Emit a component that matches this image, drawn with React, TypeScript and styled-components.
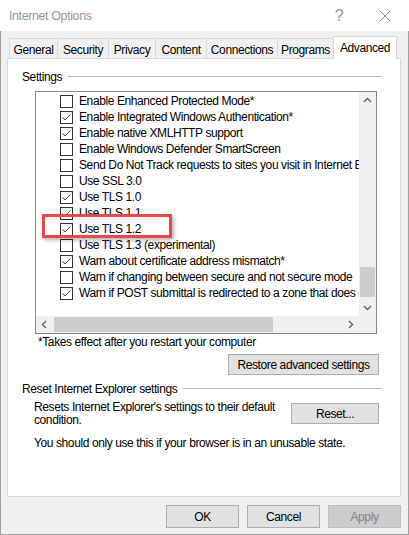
import React from 'react';
import styled, { createGlobalStyle } from 'styled-components';

const GlobalStyle = createGlobalStyle`
  html, body {
    margin: 0;
    padding: 0;
    background: #ffffff;
  }
  * {
    box-sizing: border-box;
  }
`;

const Window = styled.div`
  width: 409px;
  height: 535px;
  display: flex;
  flex-direction: column;
  background: #ffffff;
  font-family: 'Liberation Sans', Arial, sans-serif;
  font-size: 12px;
  letter-spacing: -0.4px;
  color: #000000;
`;

const TitleBar = styled.div`
  height: 31px;
  flex: none;
  display: flex;
  align-items: center;
  padding: 0 1px 0 9px;
  color: #999999;
`;

const TitleText = styled.div`
  flex: 1;
  font-size: 12.5px;
`;

const CaptionButton = styled.div`
  width: 46px;
  height: 31px;
  display: flex;
  align-items: center;
  justify-content: center;
  color: #9a9a9a;
  font-size: 16px;
`;

const Body = styled.div`
  flex: 1;
  display: flex;
  flex-direction: column;
  background: #f0f0f0;
  border: 1px solid #a0a0a0;
  border-top: none;
  padding: 5px 7px 0 6px;
`;

const TabStrip = styled.div`
  height: 22px;
  display: flex;
  align-items: flex-end;
  padding-left: 2px;
`;

const Tab = styled.div<{ $w: number; $active?: boolean }>`
  width: ${p => p.$w}px;
  height: ${p => (p.$active ? 23 : 20)}px;
  margin-bottom: ${p => (p.$active ? -1 : 0)}px;
  display: flex;
  align-items: center;
  justify-content: center;
  padding-top: ${p => (p.$active ? 0 : 2)}px;
  background: ${p => (p.$active ? '#ffffff' : '#f0f0f0')};
  border: 1px solid #d9d9d9;
  border-bottom: none;
  position: relative;
  z-index: ${p => (p.$active ? 1 : 0)};

  & + & {
    margin-left: -1px;
  }
`;

const Panel = styled.div`
  height: 439px;
  display: flex;
  flex-direction: column;
  background: #ffffff;
  border: 1px solid #d9d9d9;
  padding: 10px 18px 0 14px;
`;

const GroupHeader = styled.div`
  height: 16px;
  display: flex;
  align-items: center;
  gap: 6px;
`;

const GroupRule = styled.div`
  flex: 1;
  height: 1px;
  margin-bottom: 2px;
  background: #b8b8b8;
`;

const ListBox = styled.div`
  position: relative;
  width: 342px;
  height: 243px;
  margin: 6px 0 0 13px;
  border: 1px solid #828790;
  display: grid;
  grid-template-columns: 1fr 17px;
  grid-template-rows: 1fr 17px;
`;

const Items = styled.div`
  overflow: hidden;
  padding-top: 1px;
  background: #ffffff;
`;

const ItemRow = styled.div`
  height: 16px;
  display: flex;
  align-items: center;
  gap: 6px;
  padding-left: 24px;
  white-space: nowrap;
`;

const CheckBox = styled.span`
  flex: none;
  width: 13px;
  height: 13px;
  border: 1px solid #333333;
  background: #ffffff;
  display: flex;
`;

const VScroll = styled.div`
  background: #f0f0f0;
  display: flex;
  flex-direction: column;
`;

const HScroll = styled.div`
  background: #f0f0f0;
  display: flex;
`;

const ArrowButton = styled.div`
  flex: none;
  width: 17px;
  height: 17px;
  display: flex;
  align-items: center;
  justify-content: center;
`;

const VTrack = styled.div`
  flex: 1;
  display: flex;
  flex-direction: column;
  justify-content: flex-end;
  padding: 0 1px 2px 1px;
`;

const HTrack = styled.div`
  flex: 1;
  display: flex;
  padding: 1px 0 1px 1px;
`;

const Thumb = styled.div<{ $size: number; $vertical?: boolean }>`
  background: #cdcdcd;
  ${p => (p.$vertical ? `height: ${p.$size}px;` : `width: ${p.$size}px;`)}
`;

const Corner = styled.div`
  background: #f0f0f0;
`;

const Highlight = styled.div`
  position: absolute;
  left: 6px;
  top: 122px;
  width: 130px;
  height: 24px;
  border: 3px solid #e9484b;
  box-shadow: 2px 2px 4px rgba(0, 0, 0, 0.3);
  pointer-events: none;
`;

const Note = styled.div`
  height: 16px;
  line-height: 16px;
  margin-left: 16px;
`;

const RightRow = styled.div`
  display: flex;
  justify-content: flex-end;
  margin: 4px 3px 0 0;
`;

const PushButton = styled.button<{ $w: number; $h: number; $disabled?: boolean }>`
  width: ${p => p.$w}px;
  height: ${p => p.$h}px;
  padding: 0;
  font-family: inherit;
  font-size: 12px;
  letter-spacing: -0.4px;
  color: ${p => (p.$disabled ? '#838383' : '#000000')};
  background: ${p => (p.$disabled ? '#cccccc' : '#e1e1e1')};
  border: 1px solid ${p => (p.$disabled ? '#bfbfbf' : '#adadad')};
  border-radius: 0;
`;

const ResetHeader = styled(GroupHeader)`
  margin-top: 6px;
`;

const ResetBody = styled.div`
  display: flex;
  align-items: flex-start;
  margin: 4px 3px 0 12px;
`;

const ResetText = styled.div`
  flex: 1;
  line-height: 13px;
  padding-right: 10px;
`;

const ResetButtonWrap = styled.div`
  padding-top: 2px;
`;

const Warning = styled.div`
  margin: 8px 0 0 12px;
  line-height: 16px;
`;

const DialogButtons = styled.div`
  display: flex;
  justify-content: flex-end;
  gap: 8px;
  margin-top: 8px;
`;

const Check = () => (
  <svg width="11" height="11" viewBox="0 0 11 11">
    <polyline points="1.5,5.5 4,8 9.5,2.5" fill="none" stroke="#4a4a4a" strokeWidth="1" />
  </svg>
);

const Chevron = ({ dir }: { dir: 'up' | 'down' | 'left' | 'right' }) => {
  const d = {
    up: 'M1 6 L4.5 2.5 L8 6',
    down: 'M1 3 L4.5 6.5 L8 3',
    left: 'M6 1 L2.5 4.5 L6 8',
    right: 'M3 1 L6.5 4.5 L3 8',
  }[dir];
  return (
    <svg width="9" height="9" viewBox="0 0 9 9">
      <path d={d} fill="none" stroke="#606060" strokeWidth="1.4" />
    </svg>
  );
};

const tabs = [
  { label: 'General', w: 49 },
  { label: 'Security', w: 52 },
  { label: 'Privacy', w: 48 },
  { label: 'Content', w: 52 },
  { label: 'Connections', w: 72 },
  { label: 'Programs', w: 57 },
  { label: 'Advanced', w: 64, active: true },
];

const settings = [
  { label: 'Enable Enhanced Protected Mode*', checked: false },
  { label: 'Enable Integrated Windows Authentication*', checked: true },
  { label: 'Enable native XMLHTTP support', checked: true },
  { label: 'Enable Windows Defender SmartScreen', checked: false },
  { label: 'Send Do Not Track requests to sites you visit in Internet Explorer', checked: false },
  { label: 'Use SSL 3.0', checked: false },
  { label: 'Use TLS 1.0', checked: true },
  { label: 'Use TLS 1.1', checked: true },
  { label: 'Use TLS 1.2', checked: true },
  { label: 'Use TLS 1.3 (experimental)', checked: false },
  { label: 'Warn about certificate address mismatch*', checked: true },
  { label: 'Warn if changing between secure and not secure mode', checked: false },
  { label: 'Warn if POST submittal is redirected to a zone that does not permit posts', checked: true },
];

const App: React.FC = () => {
  return (
    <>
      <GlobalStyle />
      <Window>
        <TitleBar>
          <TitleText>Internet Options</TitleText>
          <CaptionButton>?</CaptionButton>
          <CaptionButton>
            <svg width="12" height="12" viewBox="0 0 12 12">
              <path d="M0.5 0.5 L11.5 11.5 M11.5 0.5 L0.5 11.5" stroke="#8a8a8a" strokeWidth="1" />
            </svg>
          </CaptionButton>
        </TitleBar>

        <Body>
          <TabStrip>
            {tabs.map(t => (
              <Tab key={t.label} $w={t.w} $active={t.active}>
                {t.label}
              </Tab>
            ))}
          </TabStrip>

          <Panel>
            <GroupHeader>
              <span>Settings</span>
              <GroupRule />
            </GroupHeader>

            <ListBox>
              <Items>
                {settings.map(s => (
                  <ItemRow key={s.label}>
                    <CheckBox>{s.checked && <Check />}</CheckBox>
                    <span>{s.label}</span>
                  </ItemRow>
                ))}
              </Items>
              <VScroll>
                <ArrowButton>
                  <Chevron dir="up" />
                </ArrowButton>
                <VTrack>
                  <Thumb $vertical $size={30} />
                </VTrack>
                <ArrowButton>
                  <Chevron dir="down" />
                </ArrowButton>
              </VScroll>
              <HScroll>
                <ArrowButton>
                  <Chevron dir="left" />
                </ArrowButton>
                <HTrack>
                  <Thumb $size={219} />
                </HTrack>
                <ArrowButton>
                  <Chevron dir="right" />
                </ArrowButton>
              </HScroll>
              <Corner />
              <Highlight />
            </ListBox>

            <Note>*Takes effect after you restart your computer</Note>

            <RightRow>
              <PushButton $w={151} $h={21}>Restore advanced settings</PushButton>
            </RightRow>

            <ResetHeader>
              <span>Reset Internet Explorer settings</span>
              <GroupRule />
            </ResetHeader>

            <ResetBody>
              <ResetText>Resets Internet Explorer's settings to their default condition.</ResetText>
              <ResetButtonWrap>
                <PushButton $w={88} $h={21}>Reset...</PushButton>
              </ResetButtonWrap>
            </ResetBody>

            <Warning>You should only use this if your browser is in an unusable state.</Warning>
          </Panel>

          <DialogButtons>
            <PushButton $w={73} $h={23}>OK</PushButton>
            <PushButton $w={73} $h={23}>Cancel</PushButton>
            <PushButton $w={73} $h={23} $disabled>Apply</PushButton>
          </DialogButtons>
        </Body>
      </Window>
    </>
  );
};

export default App;
